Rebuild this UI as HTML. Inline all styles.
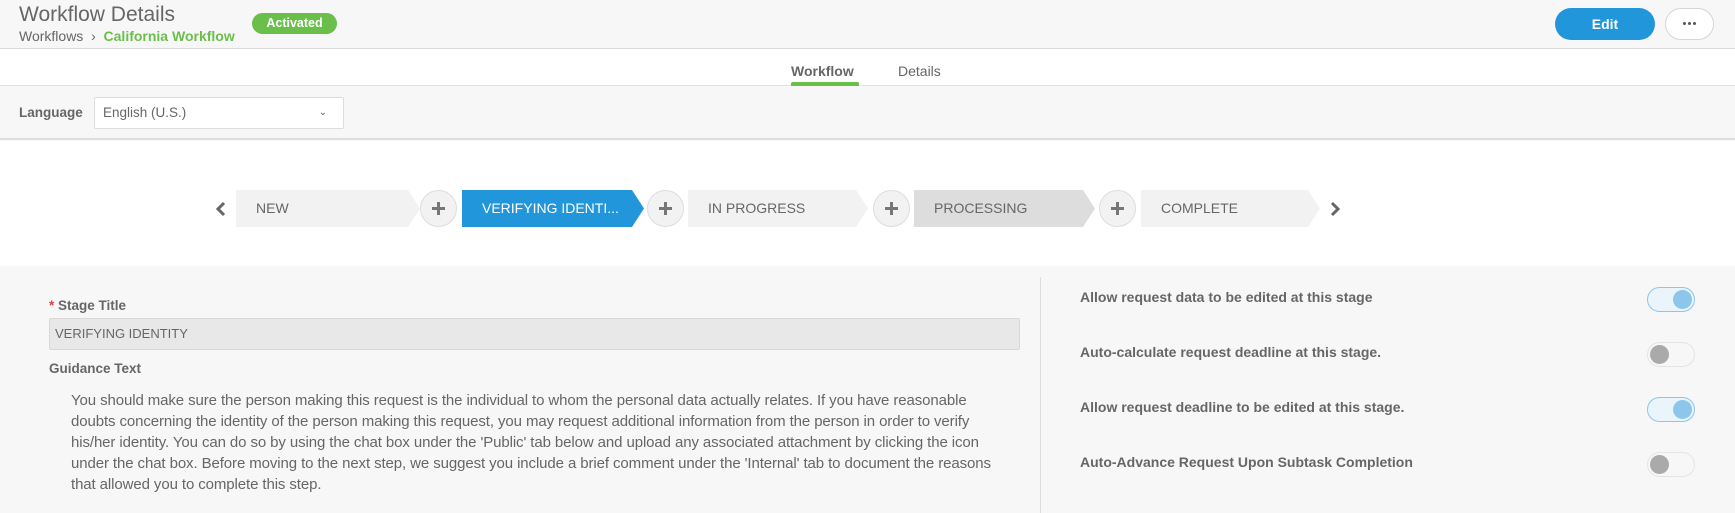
<!DOCTYPE html>
<html><head><meta charset="utf-8"><style>
*{box-sizing:border-box;margin:0;padding:0}
body{width:1735px;height:513px;overflow:hidden;background:#f7f7f7;font-family:"Liberation Sans",sans-serif;color:#666;position:relative}
.a{position:absolute}
.hdr{left:0;top:0;width:1735px;height:49px;background:#f7f7f7;border-bottom:1px solid #dcdcdc}
.tabs{left:0;top:49px;width:1735px;height:37px;background:#fff;border-bottom:1px solid #e2e2e2}
.lang{left:0;top:86px;width:1735px;height:54px;background:#f7f7f7;border-bottom:2px solid #dedede}
.white{left:0;top:141px;width:1735px;height:125px;background:#fff}
.stage{top:190px;height:37px;line-height:37px;font-size:14px;color:#666;padding-left:20px;clip-path:polygon(0 0,calc(100% - 12px) 0,100% 50%,calc(100% - 12px) 100%,0 100%)}
.plus{top:190px;width:37px;height:37px;border-radius:50%;background:#f2f2f2;border:1px solid #ddd}
.plus:before{content:"";position:absolute;left:11px;top:16px;width:13px;height:3px;background:#777}
.plus:after{content:"";position:absolute;left:16px;top:11px;width:3px;height:13px;background:#777}
.lbl{font-weight:bold;font-size:14px;color:#666}
.tg{width:48px;height:25px;border-radius:13px}
.on{background:#eaf4fb;border:1px solid #8cc6ea}
.on:after{content:"";position:absolute;right:2px;top:2px;width:19px;height:19px;border-radius:50%;background:#8cc6ea}
.off{background:#f7f7f7;border:1px solid #e4e4e4}
.off:after{content:"";position:absolute;left:2px;top:2px;width:19px;height:19px;border-radius:50%;background:#aaa}
</style></head><body>
<div class="a hdr"></div>
<div class="a" style="left:19px;top:3px;font-size:21px;color:#666">Workflow Details</div>
<div class="a" style="left:19px;top:28px;font-size:14px;color:#666">Workflows &nbsp;›&nbsp; <b style="color:#6abf4b">California Workflow</b></div>
<div class="a" style="left:252px;top:13px;width:85px;height:21px;border-radius:11px;background:#6abf4b;color:#fff;font-weight:bold;font-size:12.5px;text-align:center;line-height:21px">Activated</div>
<div class="a" style="left:1555px;top:8px;width:100px;height:32px;border-radius:16px;background:#2196db;color:#fff;font-weight:bold;font-size:14px;text-align:center;line-height:32px">Edit</div>
<div class="a" style="left:1665px;top:8px;width:49px;height:32px;border-radius:16px;background:#fff;border:1px solid #d6d6d6"></div>
<div class="a" style="left:1683px;top:22px;width:3px;height:3px;border-radius:50%;background:#555"></div>
<div class="a" style="left:1688px;top:22px;width:3px;height:3px;border-radius:50%;background:#555"></div>
<div class="a" style="left:1693px;top:22px;width:3px;height:3px;border-radius:50%;background:#555"></div>
<div class="a tabs"></div>
<div class="a" style="left:791px;top:63px;font-weight:bold;font-size:14px;color:#666">Workflow</div>
<div class="a" style="left:791px;top:82px;width:68px;height:4px;background:#6abf4b;border-radius:2px 2px 0 0"></div>
<div class="a" style="left:898px;top:63px;font-size:14px;color:#666">Details</div>
<div class="a lang"></div>
<div class="a lbl" style="left:19px;top:105px;font-size:13.5px">Language</div>
<div class="a" style="left:94px;top:97px;width:250px;height:32px;background:#fff;border:1px solid #ddd;border-radius:2px;font-size:13.5px;line-height:30px;padding-left:8px;color:#666">English (U.S.)<span style="position:absolute;right:16px;top:0;font-size:10px">⌄</span></div>
<div class="a white"></div>
<svg class="a" style="left:215px;top:201px" width="12" height="16"><path d="M9 2 L3 8 L9 14" stroke="#666" stroke-width="3" fill="none"/></svg>
<div class="a stage" style="left:236px;width:184px;background:#f2f2f2">NEW</div>
<div class="a plus" style="left:420px"></div>
<div class="a stage" style="left:462px;width:182px;background:#2196db;color:#fff">VERIFYING IDENTI...</div>
<div class="a plus" style="left:647px"></div>
<div class="a stage" style="left:688px;width:180px;background:#f2f2f2">IN PROGRESS</div>
<div class="a plus" style="left:873px"></div>
<div class="a stage" style="left:914px;width:181px;background:#ddd">PROCESSING</div>
<div class="a plus" style="left:1099px"></div>
<div class="a stage" style="left:1141px;width:179px;background:#f2f2f2">COMPLETE</div>
<svg class="a" style="left:1329px;top:201px" width="12" height="16"><path d="M3 2 L9 8 L3 14" stroke="#666" stroke-width="3" fill="none"/></svg>
<div class="a" style="left:1040px;top:277px;width:1px;height:236px;background:#ddd"></div>
<div class="a lbl" style="left:49px;top:298px;font-size:13.5px"><span style="color:#e04040">*</span> Stage Title</div>
<div class="a" style="left:49px;top:318px;width:971px;height:32px;background:#e8e8e8;border:1px solid #d8d8d8;border-radius:2px;font-size:13px;line-height:30px;padding-left:5px;color:#666">VERIFYING IDENTITY</div>
<div class="a lbl" style="left:49px;top:361px;font-size:13.5px">Guidance Text</div>
<div class="a" style="left:71px;top:390px;font-size:15px;line-height:21px;color:#666;white-space:nowrap;letter-spacing:-0.1px">You should make sure the person making this request is the individual to whom the personal data actually relates. If you have reasonable<br>doubts concerning the identity of the person making this request, you may request additional information from the person in order to verify<br>his/her identity. You can do so by using the chat box under the 'Public' tab below and upload any associated attachment by clicking the icon<br>under the chat box. Before moving to the next step, we suggest you include a brief comment under the 'Internal' tab to document the reasons<br>that allowed you to complete this step.</div>
<div class="a lbl" style="left:1080px;top:289px">Allow request data to be edited at this stage</div>
<div class="a lbl" style="left:1080px;top:344px">Auto-calculate request deadline at this stage.</div>
<div class="a lbl" style="left:1080px;top:399px">Allow request deadline to be edited at this stage.</div>
<div class="a lbl" style="left:1080px;top:454px">Auto-Advance Request Upon Subtask Completion</div>
<div class="a tg on" style="left:1647px;top:287px"></div>
<div class="a tg off" style="left:1647px;top:342px"></div>
<div class="a tg on" style="left:1647px;top:397px"></div>
<div class="a tg off" style="left:1647px;top:452px"></div>
</body></html>
